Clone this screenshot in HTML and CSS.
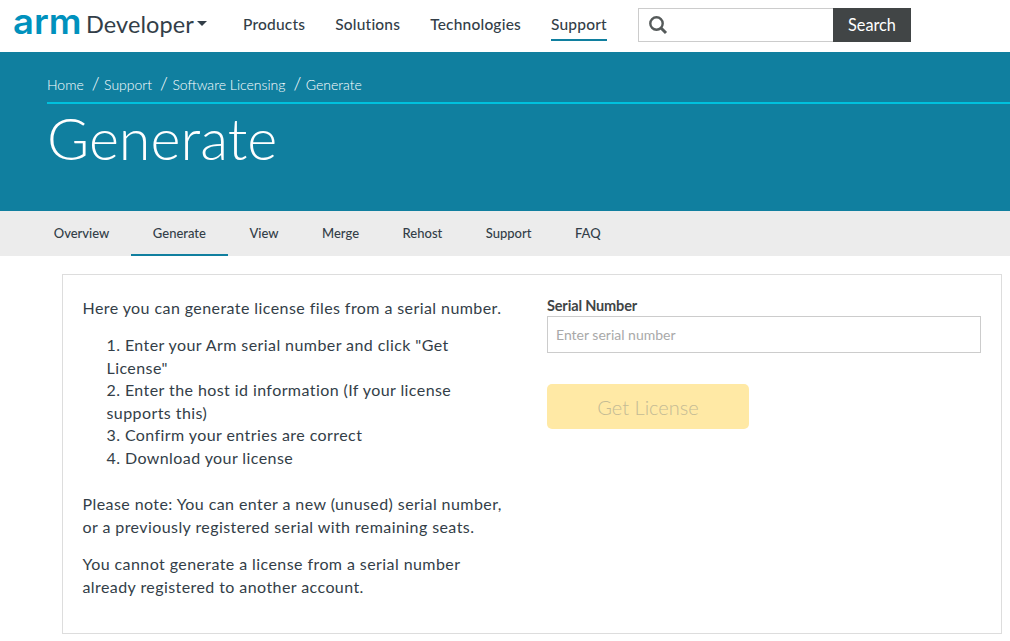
FILE: index.html
```html
<!DOCTYPE html>
<html lang="en">
<head>
  <meta charset="UTF-8">
  <title>Generate</title>
  <link rel="stylesheet" href="styles.css">
</head>
<body>
  <header class="top-nav">
    <a class="logo" href="#"><span class="logo-arm">arm</span><span class="logo-dev">Developer</span><span class="caret"></span></a>
    <nav class="main-links">
      <a href="#">Products</a>
      <a href="#">Solutions</a>
      <a href="#">Technologies</a>
      <a href="#" class="active">Support</a>
    </nav>
    <form class="search">
      <div class="search-box">
        <svg width="20" height="20" viewBox="0 0 20 20" fill="none" stroke="#555a5a">
          <circle cx="8.5" cy="8.5" r="6.2" stroke-width="2.4"/>
          <path d="M13 13l5 5" stroke-width="3"/>
        </svg>
      </div>
      <button type="button">Search</button>
    </form>
  </header>

  <section class="hero">
    <div class="crumbs">
      <a href="#">Home</a>
      <a href="#"><i>/</i>Support</a>
      <a href="#"><i>/</i>Software Licensing</a>
      <a href="#"><i>/</i>Generate</a>
    </div>
    <h1>Generate</h1>
  </section>

  <nav class="sub-nav">
    <a href="#">Overview</a>
    <a href="#" class="active">Generate</a>
    <a href="#">View</a>
    <a href="#">Merge</a>
    <a href="#">Rehost</a>
    <a href="#">Support</a>
    <a href="#">FAQ</a>
  </nav>

  <main class="card">
    <div class="intro">
      <p>Here you can generate license files from a serial number.</p>
      <ol>
        <li>1. Enter your Arm serial number and click "Get License"</li>
        <li>2. Enter the host id information (If your license supports this)</li>
        <li>3. Confirm your entries are correct</li>
        <li>4. Download your license</li>
      </ol>
      <p>Please note: You can enter a new (unused) serial number, or a previously registered serial with remaining seats.</p>
      <p>You cannot generate a license from a serial number already registered to another account.</p>
    </div>
    <form class="serial-form">
      <label for="serial">Serial Number</label>
      <input id="serial" type="text" placeholder="Enter serial number">
      <button type="button" disabled>Get License</button>
    </form>
  </main>
</body>
</html>
```

FILE: styles.css
```css
* {
  box-sizing: border-box;
}
body {
  margin: 0;
  font-family: "Lato", sans-serif;
  color: #333e48;
  background-color: #fff;
}
a {
  color: inherit;
  text-decoration: none;
}
.top-nav {
  display: flex;
  align-items: flex-start;
  height: 52px;
  padding-left: 13px;
}
.logo {
  display: flex;
  align-items: center;
  width: 230px;
  height: 50px;
}
.logo-arm {
  display: inline-block;
  width: 73px;
  font-family: "Inter", sans-serif;
  font-size: 35px;
  line-height: 40px;
  font-weight: 600;
  color: #0091bd;
  transform: scaleX(1.04);
  transform-origin: left center;
  margin-top: -9px;
}
.logo-dev {
  margin-top: -3px;
  font-size: 23.5px;
  font-weight: 400;
  letter-spacing: 0.1px;
}
.caret {
  width: 0;
  height: 0;
  margin: 0 0 4px 3px;
  border-left: 5px solid transparent;
  border-right: 5px solid transparent;
  border-top: 5px solid #333e48;
}
.main-links {
  display: flex;
  gap: 30px;
  width: 395px;
  padding-top: 14px;
  font-size: 15.5px;
  font-weight: 500;
  letter-spacing: 0.2px;
}
.main-links a {
  height: 27px;
  line-height: 21px;
}
.main-links .active {
  border-bottom: 2px solid #107f9f;
}
.search {
  display: flex;
  width: 273px;
  height: 34px;
  margin-top: 8px;
}
.search-box {
  flex: 1;
  padding: 6px 0 0 9px;
  border: 1px solid #ccc;
  border-right: 0;
}
.search button {
  width: 78px;
  border: 0;
  padding: 0 0 2px;
  font-family: inherit;
  font-size: 16.3px;
  color: #fff;
  background-color: #414546;
}
.hero {
  height: 159px;
  padding-left: 47px;
  color: #fff;
  background-color: #107f9f;
}
.crumbs {
  display: flex;
  align-items: baseline;
  gap: 8px;
  height: 52px;
  padding-top: 23px;
  border-bottom: 2px solid #00c1de;
  font-size: 14px;
  font-weight: 300;
  line-height: 18px;
}
.crumbs i {
  font-style: normal;
  font-size: 18px;
  line-height: 16px;
  margin-right: 4.5px;
}
.hero h1 {
  margin: 0;
  font-size: 57.5px;
  font-weight: 300;
  line-height: 68px;
}
.sub-nav {
  display: flex;
  height: 45px;
  padding-left: 32px;
  background-color: #ececec;
  font-size: 13px;
  font-weight: 500;
}
.sub-nav a {
  padding: 14px 21.75px 0;
  line-height: 16px;
}
.sub-nav .active {
  border-bottom: 2px solid #107f9f;
}
.card {
  display: grid;
  grid-template-columns: 464px 434px;
  width: 940px;
  height: 360px;
  margin: 18px 0 0 62px;
  padding: 21px 19.5px 0;
  border: 1px solid #ddd;
}
.intro {
  padding-top: 0.5px;
  font-size: 16px;
  line-height: 22.5px;
  letter-spacing: 0.42px;
  color: #333e48;
}
.intro p {
  width: 430px;
  margin: 0 0 15px;
}
.intro ol {
  list-style: none;
  width: 390px;
  margin: 15px 0 24px;
  padding-left: 24px;
}
.serial-form {
  display: flex;
  flex-direction: column;
  align-items: flex-start;
  padding-left: 0.5px;
}
.serial-form label {
  font-size: 14.5px;
  font-weight: 700;
  line-height: 20px;
  letter-spacing: -0.15px;
  color: #414546;
}
.serial-form input {
  width: 434px;
  height: 37px;
  padding: 0 8px;
  border: 1px solid #ccc;
  border-radius: 0;
  font-family: inherit;
  font-size: 14px;
}
.serial-form input::placeholder {
  color: #a9a9a9;
}
.serial-form button {
  width: 202px;
  height: 45px;
  margin-top: 31px;
  border: 0;
  border-radius: 5px;
  font-family: inherit;
  font-size: 20px;
  font-weight: 300;
  color: #c4bb95;
  background-color: #ffe9a5;
}
```
